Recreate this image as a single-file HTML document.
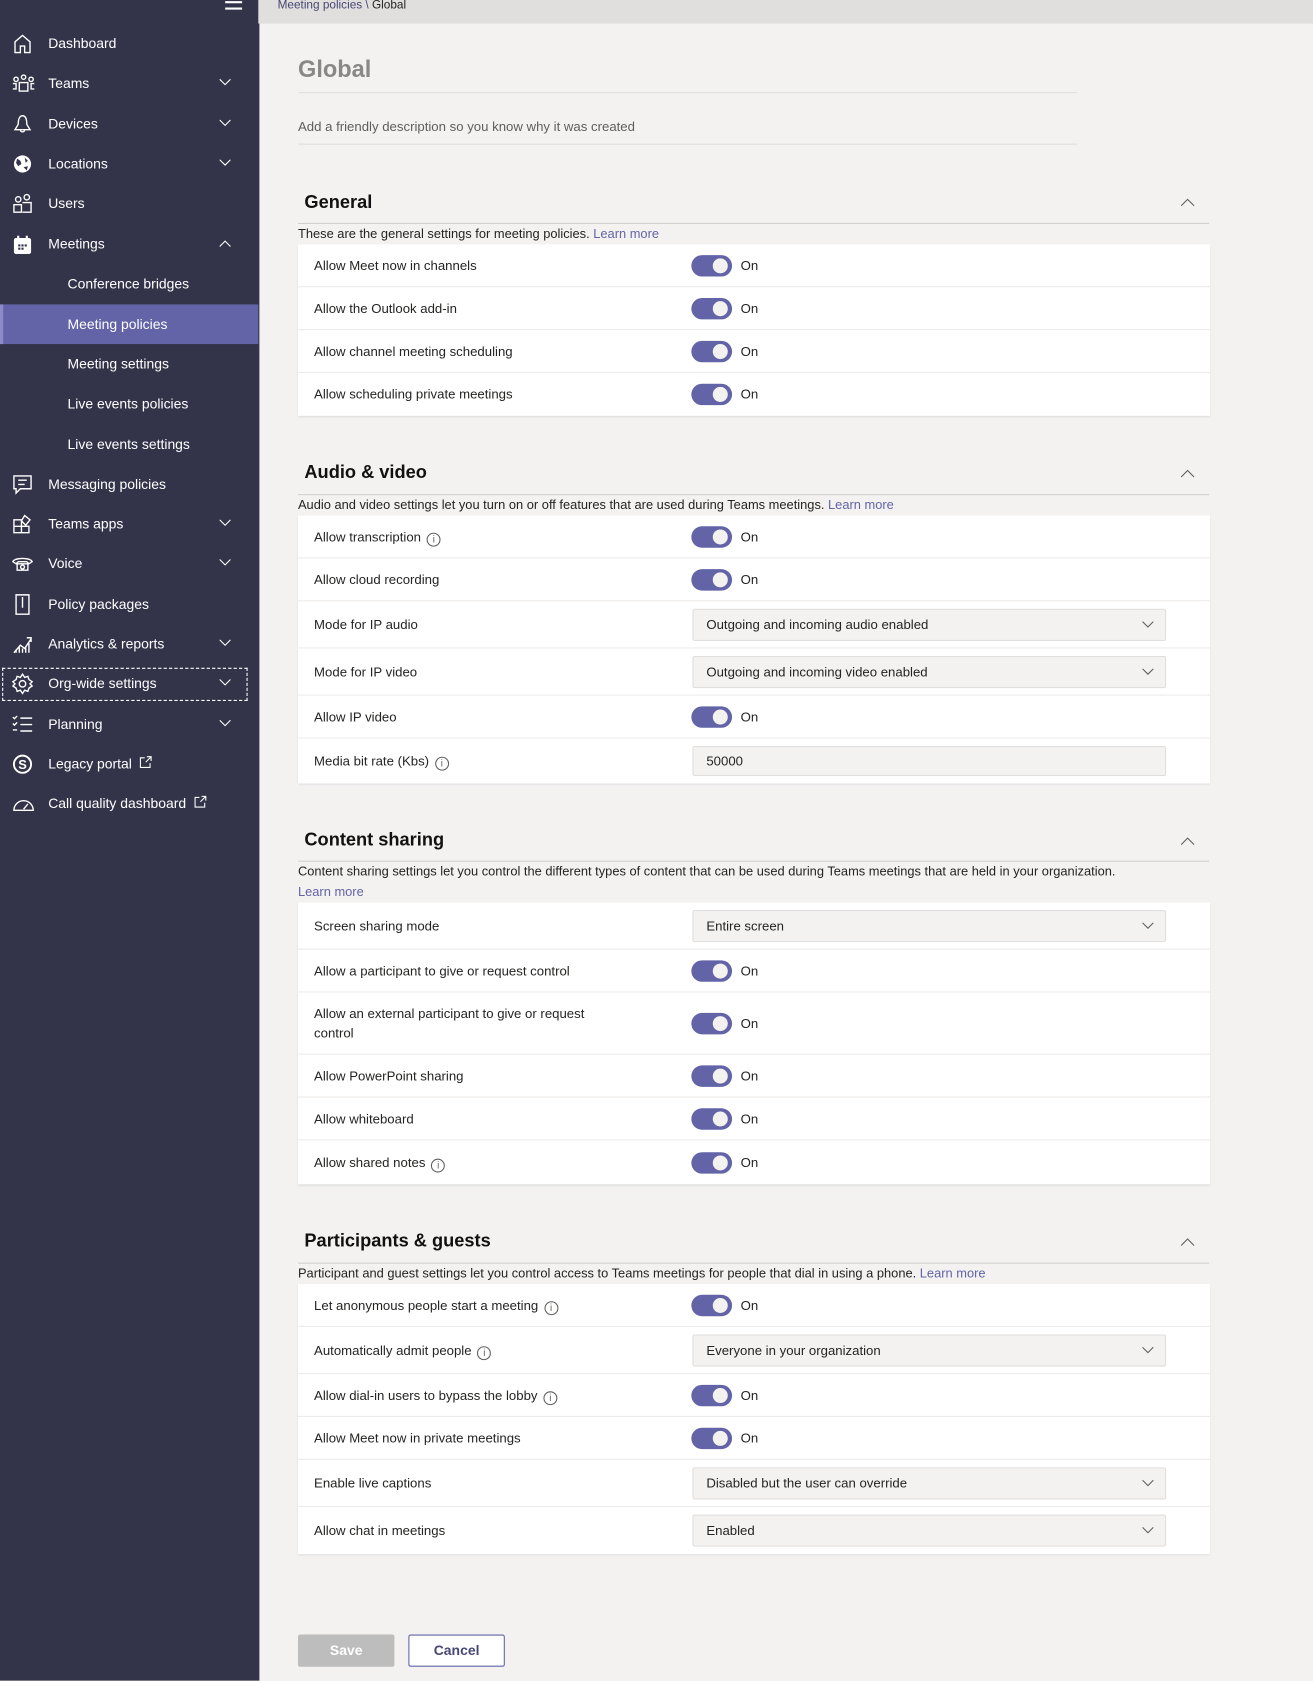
<!DOCTYPE html>
<html><head><meta charset="utf-8">
<style>
*{box-sizing:border-box;margin:0;padding:0}
html,body{width:1313px;height:1680px;overflow:hidden;background:#f3f2f1;font-family:"Liberation Sans",sans-serif}
#w{position:absolute;left:0;top:0;width:1225px;height:1568px;transform:scale(1.07184);transform-origin:0 0;background:#f3f2f1}
#sb{position:absolute;left:0;top:0;width:242px;height:1568px;background:#33344a;color:#fff;font-size:13px}
.ni{position:absolute;left:0;width:241px;height:37px;line-height:37px}
.ni .t{position:absolute;left:45px;top:0}
.ni svg.ic{position:absolute;left:11px;top:9px}
.ni .cv{position:absolute;left:204px;top:14px}
.sub .t{left:63px}
.sel{background:#6264a7;border-left:3px solid #8b8cc7}
#bc{position:absolute;left:241px;top:0;width:984px;height:22px;background:#e1dfdd;font-size:11px;color:#464775;padding-left:18px;line-height:11px}
.abs{position:absolute}
.sh{position:absolute;left:284px;font-size:17px;font-weight:bold;color:#111}
.ln{position:absolute;left:278px;width:850px;height:1px;background:#d2d0ce}
.ds{position:absolute;left:278px;font-size:12px;color:#252423;width:860px;line-height:19px}
.ds a{color:#6264a7;text-decoration:none}
.card{position:absolute;left:278px;width:851px;background:#fff;box-shadow:0 1px 2px rgba(0,0,0,.12)}
.row{position:relative;border-bottom:1px solid #edebe9;font-size:12.3px;color:#252423}
.row:last-child{border-bottom:none}
.row .l{position:absolute;left:15px;top:50%;transform:translateY(-50%);line-height:18px;width:300px}
.tg{position:absolute;left:367px;top:50%;margin-top:-10px;width:38px;height:20px;border-radius:10px;background:#6264a7}
.tg:after{content:"";position:absolute;right:4px;top:3px;width:14px;height:14px;border-radius:50%;background:#f3f2f1}
.on{position:absolute;left:413px;top:50%;transform:translateY(-50%)}
.dd{position:absolute;left:368px;top:50%;margin-top:-15px;width:442px;height:30px;background:#f3f2f1;border:1px solid #e1dfdd;border-radius:2px;line-height:28px;padding-left:12px}
.dd svg{position:absolute;right:10px;top:10px}
.inf{display:inline-block;width:13px;height:13px;border:1px solid #605e5c;border-radius:50%;font-size:9px;line-height:11px;text-align:center;vertical-align:-1px;margin-left:2px;color:#605e5c;font-style:normal}
.up{position:absolute;left:1101px}
</style></head><body><div id="w">
<div id="sb">
<svg class="abs" style="left:210px;top:0" width="16" height="12"><path d="M0 2h16M0 8h16" stroke="#fff" stroke-width="2"/></svg>
<div class="ni" style="top:22px"><svg class="ic" width="20" height="20" fill="none" stroke="#fff" stroke-width="1.3"><path d="M3 18V8l7-6 7 6v10h-5v-6H8v6z"/></svg><span class="t">Dashboard</span></div>
<div class="ni" style="top:59px"><svg class="ic" width="22" height="20" fill="none" stroke="#fff" stroke-width="1.3"><circle cx="4" cy="6" r="2"/><circle cx="11" cy="4" r="2"/><circle cx="18" cy="6" r="2"/><path d="M7 9h8v8H7zM1 10h3v5H1M21 10h-3v5h3"/></svg><span class="t">Teams</span><svg class="cv" width="12" height="8" fill="none" stroke="#fff"><path d="M1 1l5 5 5-5"/></svg></div>
<div class="ni" style="top:97px"><svg class="ic" width="20" height="20" fill="none" stroke="#fff" stroke-width="1.3"><path d="M10 2c-3 0-4 4-4 8l-3 5h14l-3-5c0-4-1-8-4-8zM8 15a2 2 0 0 0 4 0"/></svg><span class="t">Devices</span><svg class="cv" width="12" height="8" fill="none" stroke="#fff"><path d="M1 1l5 5 5-5"/></svg></div>
<div class="ni" style="top:134px"><svg class="ic" width="20" height="20"><circle cx="10" cy="10" r="8" fill="#fff"/><path d="M5 5l3 2 1 3-3 2-2-3zM12 4l3 3-2 2zM11 13l4-1-1 4z" fill="#33344a"/></svg><span class="t">Locations</span><svg class="cv" width="12" height="8" fill="none" stroke="#fff"><path d="M1 1l5 5 5-5"/></svg></div>
<div class="ni" style="top:171px"><svg class="ic" width="20" height="20" fill="none" stroke="#fff" stroke-width="1.3"><circle cx="6" cy="6" r="2.5"/><circle cx="14" cy="4" r="2.5"/><path d="M2 11h7v7H2zM10 9h8v9h-8"/></svg><span class="t">Users</span></div>
<div class="ni" style="top:209px"><svg class="ic" width="20" height="20"><rect x="2" y="4" width="16" height="15" rx="2" fill="#fff"/><path d="M6 2v4M14 2v4" stroke="#fff" stroke-width="2"/><path d="M6 10h2v2H6zM9 10h2v2H9zM12 10h2v2h-2zM6 13h2v2H6zM9 13h2v2H9z" fill="#33344a"/></svg><span class="t">Meetings</span><svg class="cv" width="12" height="8" fill="none" stroke="#fff"><path d="M1 7l5-5 5 5"/></svg></div>
<div class="ni sub" style="top:246px"><span class="t">Conference bridges</span></div>
<div class="ni sub sel" style="top:284px"><span class="t" style="left:60px">Meeting policies</span></div>
<div class="ni sub" style="top:321px"><span class="t">Meeting settings</span></div>
<div class="ni sub" style="top:358px"><span class="t">Live events policies</span></div>
<div class="ni sub" style="top:396px"><span class="t">Live events settings</span></div>
<div class="ni" style="top:433px"><svg class="ic" width="20" height="20" fill="none" stroke="#fff" stroke-width="1.3"><path d="M2 2h16v12H8l-4 4v-4H2zM6 6h8M6 10h6"/></svg><span class="t">Messaging policies</span></div>
<div class="ni" style="top:470px"><svg class="ic" width="20" height="20" fill="none" stroke="#fff" stroke-width="1.3"><path d="M2 6h7v6H2zM9 12h7v6H9zM2 12h7v6H2zM12 2l5 4-4 5-4-4z"/></svg><span class="t">Teams apps</span><svg class="cv" width="12" height="8" fill="none" stroke="#fff"><path d="M1 1l5 5 5-5"/></svg></div>
<div class="ni" style="top:507px"><svg class="ic" width="20" height="20" fill="none" stroke="#fff" stroke-width="1.3"><path d="M1 8c2-4 16-4 18 0l-3 2-2-2H6L4 10zM5 10h10v6H5z"/><circle cx="10" cy="13" r="1.8"/></svg><span class="t">Voice</span><svg class="cv" width="12" height="8" fill="none" stroke="#fff"><path d="M1 1l5 5 5-5"/></svg></div>
<div class="ni" style="top:545px"><svg class="ic" width="20" height="20" fill="none" stroke="#fff" stroke-width="1.3"><path d="M4 1h12v18H4zM10 3v10"/></svg><span class="t">Policy packages</span></div>
<div class="ni" style="top:582px"><svg class="ic" width="20" height="20" fill="none" stroke="#fff" stroke-width="1.3"><path d="M2 18l6-7 4 3 6-9M14 4h4v4M4 18v-3M7 18v-5M10 18v-4M13 18v-6M16 18v-9"/></svg><span class="t">Analytics &amp; reports</span><svg class="cv" width="12" height="8" fill="none" stroke="#fff"><path d="M1 1l5 5 5-5"/></svg></div>
<div class="abs" style="left:2px;top:623px;width:229px;height:31px;border:1px dashed #fff"></div>
<div class="ni" style="top:619px"><svg class="ic" width="20" height="20" fill="none" stroke="#fff" stroke-width="1.3"><circle cx="10" cy="10" r="3"/><path d="M10 1l2 3 3-1 1 3 3 2-2 2 2 2-3 2-1 3-3-1-2 3-2-3-3 1-1-3-3-2 2-2-2-2 3-2 1-3 3 1z"/></svg><span class="t">Org-wide settings</span><svg class="cv" width="12" height="8" fill="none" stroke="#fff"><path d="M1 1l5 5 5-5"/></svg></div>
<div class="ni" style="top:657px"><svg class="ic" width="20" height="20" fill="none" stroke="#fff" stroke-width="1.3"><path d="M8 4h11M8 10h11M8 16h11M1 3l1.5 1.5L5 2M1 9l1.5 1.5L5 8M1 15h4"/></svg><span class="t">Planning</span><svg class="cv" width="12" height="8" fill="none" stroke="#fff"><path d="M1 1l5 5 5-5"/></svg></div>
<div class="ni" style="top:694px"><svg class="ic" width="20" height="20"><circle cx="10" cy="10" r="8" fill="none" stroke="#fff" stroke-width="1.8"/><text x="10" y="14.5" font-size="12" font-weight="bold" fill="#fff" text-anchor="middle" font-family="Liberation Sans">S</text></svg><span class="t">Legacy portal &nbsp;<svg width="12" height="12" fill="none" stroke="#fff"><path d="M5 2H1v9h9V7M7 1h4v4M11 1L6 6"/></svg></span></div>
<div class="ni" style="top:731px"><svg class="ic" width="22" height="20" fill="none" stroke="#fff" stroke-width="1.3"><path d="M2 16a9 9 0 0 1 18 0zM11 15l4-5"/></svg><span class="t">Call quality dashboard &nbsp;<svg width="12" height="12" fill="none" stroke="#fff"><path d="M5 2H1v9h9V7M7 1h4v4M11 1L6 6"/></svg></span></div>
</div>
<div id="bc">Meeting policies \ <span style="color:#252423">Global</span></div>

<div class="abs" style="left:278px;top:52px;font-size:22px;font-weight:bold;color:#8a8886">Global</div>
<div class="abs" style="left:278px;top:86px;width:727px;height:1px;background:#e1dfdd"></div>
<div class="abs" style="left:278px;top:111px;font-size:12.3px;color:#605e5c">Add a friendly description so you know why it was created</div>
<div class="abs" style="left:278px;top:134px;width:727px;height:1px;background:#e1dfdd"></div>

<div class="sh" style="top:179px">General</div>
<svg class="up" style="top:184px" width="14" height="9" fill="none" stroke="#605e5c"><path d="M1 8l6-6 6 6"/></svg>
<div class="ln" style="top:208px"></div>
<div class="ds" style="top:209px">These are the general settings for meeting policies. <a>Learn more</a></div>
<div class="card" style="top:228px">
<div class="row" style="height:40px"><span class="l">Allow Meet now in channels</span><span class="tg"></span><span class="on">On</span></div>
<div class="row" style="height:40px"><span class="l">Allow the Outlook add-in</span><span class="tg"></span><span class="on">On</span></div>
<div class="row" style="height:40px"><span class="l">Allow channel meeting scheduling</span><span class="tg"></span><span class="on">On</span></div>
<div class="row" style="height:40px"><span class="l">Allow scheduling private meetings</span><span class="tg"></span><span class="on">On</span></div>
</div>

<div class="sh" style="top:431px">Audio &amp; video</div>
<svg class="up" style="top:437px" width="14" height="9" fill="none" stroke="#605e5c"><path d="M1 8l6-6 6 6"/></svg>
<div class="ln" style="top:461px"></div>
<div class="ds" style="top:462px">Audio and video settings let you turn on or off features that are used during Teams meetings. <a>Learn more</a></div>
<div class="card" style="top:481px">
<div class="row" style="height:40px"><span class="l">Allow transcription <i class="inf">i</i></span><span class="tg"></span><span class="on">On</span></div>
<div class="row" style="height:40px"><span class="l">Allow cloud recording</span><span class="tg"></span><span class="on">On</span></div>
<div class="row" style="height:44px"><span class="l">Mode for IP audio</span><span class="dd">Outgoing and incoming audio enabled<svg width="12" height="8" fill="none" stroke="#605e5c"><path d="M1 1l5 5 5-5"/></svg></span></div>
<div class="row" style="height:44px"><span class="l">Mode for IP video</span><span class="dd">Outgoing and incoming video enabled<svg width="12" height="8" fill="none" stroke="#605e5c"><path d="M1 1l5 5 5-5"/></svg></span></div>
<div class="row" style="height:40px"><span class="l">Allow IP video</span><span class="tg"></span><span class="on">On</span></div>
<div class="row" style="height:42px"><span class="l">Media bit rate (Kbs) <i class="inf">i</i></span><span class="dd" style="margin-top:-14px;height:28px;line-height:26px">50000</span></div>
</div>

<div class="sh" style="top:774px">Content sharing</div>
<svg class="up" style="top:780px" width="14" height="9" fill="none" stroke="#605e5c"><path d="M1 8l6-6 6 6"/></svg>
<div class="ln" style="top:803px"></div>
<div class="ds" style="top:804px">Content sharing settings let you control the different types of content that can be used during Teams meetings that are held in your organization.<br><a>Learn more</a></div>
<div class="card" style="top:842px">
<div class="row" style="height:44px"><span class="l">Screen sharing mode</span><span class="dd">Entire screen<svg width="12" height="8" fill="none" stroke="#605e5c"><path d="M1 1l5 5 5-5"/></svg></span></div>
<div class="row" style="height:40px"><span class="l">Allow a participant to give or request control</span><span class="tg"></span><span class="on">On</span></div>
<div class="row" style="height:58px"><span class="l" style="width:290px">Allow an external participant to give or request control</span><span class="tg"></span><span class="on">On</span></div>
<div class="row" style="height:40px"><span class="l">Allow PowerPoint sharing</span><span class="tg"></span><span class="on">On</span></div>
<div class="row" style="height:40px"><span class="l">Allow whiteboard</span><span class="tg"></span><span class="on">On</span></div>
<div class="row" style="height:41px"><span class="l">Allow shared notes <i class="inf">i</i></span><span class="tg"></span><span class="on">On</span></div>
</div>

<div class="sh" style="top:1148px">Participants &amp; guests</div>
<svg class="up" style="top:1154px" width="14" height="9" fill="none" stroke="#605e5c"><path d="M1 8l6-6 6 6"/></svg>
<div class="ln" style="top:1178px"></div>
<div class="ds" style="top:1179px">Participant and guest settings let you control access to Teams meetings for people that dial in using a phone. <a>Learn more</a></div>
<div class="card" style="top:1198px">
<div class="row" style="height:40px"><span class="l">Let anonymous people start a meeting <i class="inf">i</i></span><span class="tg"></span><span class="on">On</span></div>
<div class="row" style="height:44px"><span class="l">Automatically admit people <i class="inf">i</i></span><span class="dd">Everyone in your organization<svg width="12" height="8" fill="none" stroke="#605e5c"><path d="M1 1l5 5 5-5"/></svg></span></div>
<div class="row" style="height:40px"><span class="l">Allow dial-in users to bypass the lobby <i class="inf">i</i></span><span class="tg"></span><span class="on">On</span></div>
<div class="row" style="height:40px"><span class="l">Allow Meet now in private meetings</span><span class="tg"></span><span class="on">On</span></div>
<div class="row" style="height:44px"><span class="l">Enable live captions</span><span class="dd">Disabled but the user can override<svg width="12" height="8" fill="none" stroke="#605e5c"><path d="M1 1l5 5 5-5"/></svg></span></div>
<div class="row" style="height:44px"><span class="l">Allow chat in meetings</span><span class="dd">Enabled<svg width="12" height="8" fill="none" stroke="#605e5c"><path d="M1 1l5 5 5-5"/></svg></span></div>
</div>

<div class="abs" style="left:278px;top:1525px;width:90px;height:30px;background:#bdbdbd;border-radius:2px;color:#fff;font-weight:bold;font-size:13px;text-align:center;line-height:30px">Save</div>
<div class="abs" style="left:381px;top:1525px;width:90px;height:30px;background:#fff;border:1px solid #6264a7;border-radius:2px;color:#464775;font-weight:bold;font-size:13px;text-align:center;line-height:28px">Cancel</div>
</div></body></html>
